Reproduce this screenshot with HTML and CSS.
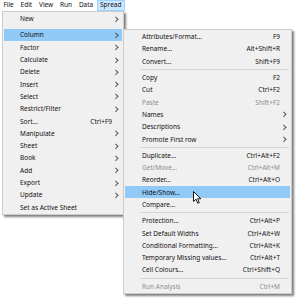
FILE: index.html
```html
<!DOCTYPE html>
<html>
<head>
<meta charset="utf-8">
<link rel="stylesheet" href="styles.css">
</head>
<body>
<div class="screen">
  <div class="menubar">
    <span class="mb-item">File</span>
    <span class="mb-item">Edit</span>
    <span class="mb-item">View</span>
    <span class="mb-item">Run</span>
    <span class="mb-item">Data</span>
    <span class="mb-item active">Spread</span>
  </div>

  <div class="menu menu-main">
    <div class="item sub"><span class="label">New</span></div>
    <div class="sep blank"></div>
    <div class="item sub hl"><span class="label">Column</span></div>
    <div class="item sub"><span class="label">Factor</span></div>
    <div class="item sub"><span class="label">Calculate</span></div>
    <div class="item sub"><span class="label">Delete</span></div>
    <div class="item sub"><span class="label">Insert</span></div>
    <div class="item sub"><span class="label">Select</span></div>
    <div class="item sub"><span class="label">Restrict/Filter</span></div>
    <div class="item"><span class="label">Sort...</span><span class="key">Ctrl+F9</span></div>
    <div class="item sub"><span class="label">Manipulate</span></div>
    <div class="item sub"><span class="label">Sheet</span></div>
    <div class="item sub"><span class="label">Book</span></div>
    <div class="item sub"><span class="label">Add</span></div>
    <div class="item sub"><span class="label">Export</span></div>
    <div class="item sub"><span class="label">Update</span></div>
    <div class="item"><span class="label">Set as Active Sheet</span></div>
  </div>

  <div class="menu menu-col">
    <div class="item"><span class="label">Attributes/Format...</span><span class="key">F9</span></div>
    <div class="item"><span class="label">Rename...</span><span class="key">Alt+Shift+R</span></div>
    <div class="item"><span class="label">Convert...</span><span class="key">Shift+F9</span></div>
    <div class="sep"></div>
    <div class="item"><span class="label">Copy</span><span class="key">F2</span></div>
    <div class="item"><span class="label">Cut</span><span class="key">Ctrl+F2</span></div>
    <div class="item disabled"><span class="label">Paste</span><span class="key">Shift+F2</span></div>
    <div class="item sub"><span class="label">Names</span></div>
    <div class="item sub"><span class="label">Descriptions</span></div>
    <div class="item sub"><span class="label">Promote First row</span></div>
    <div class="sep"></div>
    <div class="item"><span class="label">Duplicate...</span><span class="key">Ctrl+Alt+F2</span></div>
    <div class="item disabled"><span class="label">Get/Move...</span><span class="key">Ctrl+Alt+M</span></div>
    <div class="item"><span class="label">Reorder...</span><span class="key">Ctrl+Alt+O</span></div>
    <div class="item hl"><span class="label">Hide/Show...</span></div>
    <div class="item"><span class="label">Compare...</span></div>
    <div class="sep"></div>
    <div class="item"><span class="label">Protection...</span><span class="key">Ctrl+Alt+P</span></div>
    <div class="item"><span class="label">Set Default Widths</span><span class="key">Ctrl+Alt+W</span></div>
    <div class="item"><span class="label">Conditional Formatting...</span><span class="key">Ctrl+Alt+K</span></div>
    <div class="item"><span class="label">Temporary Missing values...</span><span class="key">Ctrl+Alt+T</span></div>
    <div class="item"><span class="label">Cell Colours...</span><span class="key">Ctrl+Shift+Q</span></div>
    <div class="sep"></div>
    <div class="item disabled"><span class="label">Run Analysis</span><span class="key">Ctrl+M</span></div>
  </div>

  <svg class="cursor" width="10" height="14" viewBox="0 0 10 14">
    <path d="M0.5 0.5 L0.5 10.5 L3 8.2 L4.8 12.3 L6.3 11.6 L4.6 7.7 L7.8 7.7 Z" fill="#fff" stroke="#000" stroke-width="0.9" stroke-linejoin="round"/>
  </svg>
</div>
</body>
</html>
```

FILE: styles.css
```css
html, body {
  margin: 0;
  padding: 0;
  background: #ffffff;
}

.screen {
  position: relative;
  width: 300px;
  height: 300px;
  overflow: hidden;
  font-family: "Noto Sans", "Open Sans", "Liberation Sans", sans-serif;
  font-size: 6.5px;
  color: #111;
}

.menubar {
  display: flex;
  height: 11px;
  align-items: stretch;
}

.mb-item {
  display: flex;
  align-items: center;
  padding: 0 2.4px;
  border: 1px solid transparent;
  box-sizing: border-box;
  line-height: 1;
  font-size: 6.5px;
}

.mb-item.active {
  background: #cce8ff;
  border-color: #99d1ff;
}

.menu {
  position: absolute;
  background: #f0f0f0;
  border: 1px solid #cccccc;
  box-sizing: border-box;
  padding: 0.5px 0;
  box-shadow: 2px 2px 2px rgba(0, 0, 0, 0.5);
}

.menu-main {
  left: 2px;
  top: 11px;
  width: 122px;
}

.menu-col {
  left: 123px;
  top: 29px;
  width: 169px;
}

.item {
  position: relative;
  display: flex;
  align-items: center;
  height: 12.3px;
  margin: 0 1px;
  padding: 0 10px 0 16px;
  white-space: nowrap;
}

.menu-col .item {
  padding-left: 17px;
}

.item .label {
  flex: 1;
}

.item .key {
  text-align: right;
}

.item.hl {
  background: #91c9f7;
}

.item.disabled {
  color: #8d8d8d;
}

.item.sub::after {
  content: "";
  position: absolute;
  right: 5px;
  top: 50%;
  width: 2.5px;
  height: 2.5px;
  border-top: 0.9px solid #555;
  border-right: 0.9px solid #555;
  transform: translateY(-50%) rotate(45deg);
}

.sep {
  height: 4px;
  display: flex;
  align-items: center;
  padding-left: 16px;
  padding-right: 2px;
}

.sep::before {
  content: "";
  flex: 1;
  height: 1px;
  background: #d7d7d7;
}

.sep.blank::before {
  background: transparent;
}

.cursor {
  position: absolute;
  left: 192.5px;
  top: 190.5px;
}
```
